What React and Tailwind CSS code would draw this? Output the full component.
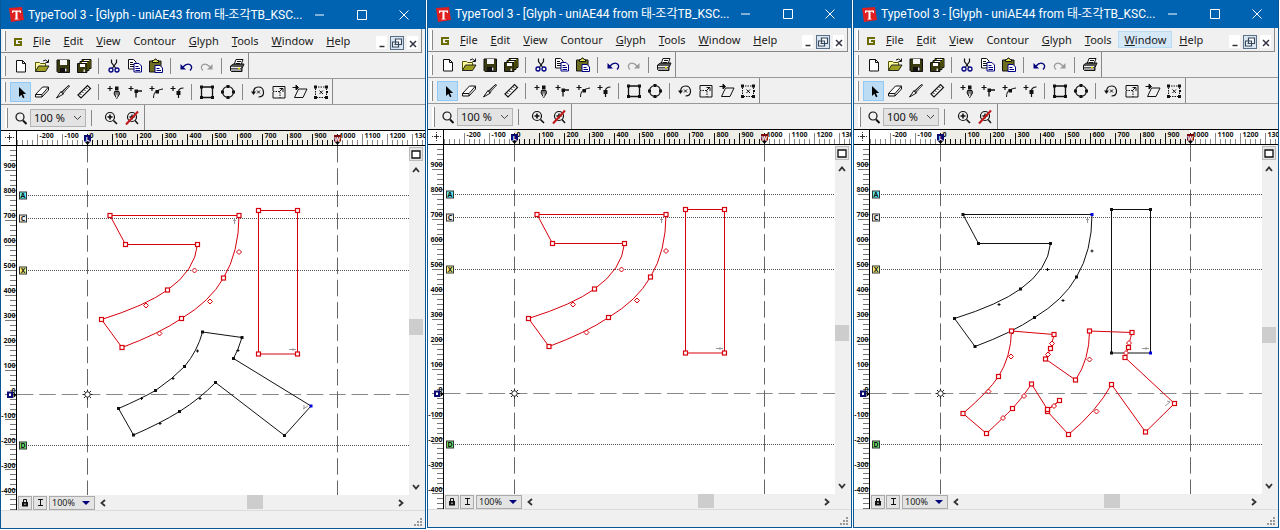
import React from "react";

/* ---------- small drawings ---------- */

function Icon({ children, size = 16 }) {
  return (
    <svg width={size} height={size} viewBox="0 0 16 16" fill="none" stroke="#111" strokeWidth="1" aria-hidden="true" className="block shrink-0">
      {children}
    </svg>
  );
}

const icons = {
  new: <path d="M3.5 2.5h6l3 3v8.500h-9zM9.500 2.500v3h3" fill="#fff" />,
  open: (
    <>
      <path d="M1.500 13.500v-9h4l1 1h5v3" fill="#ffffa0" stroke="#555500" />
      <path d="M1.500 13.500l3-5.500h10.500l-3.500 5.500z" fill="#a0a020" stroke="#222" />
      <path d="M9 3q3-2.500 5 1M14.500 1.500v3h-3" />
    </>
  ),
  save: (
    <>
      <path d="M2 2h12.500v12.500h-11.500l-1-1z" fill="#3a3a10" />
      <path d="M5 2h7v5h-7z" fill="#f4f4f4" stroke="none" />
      <path d="M5 10h7v4h-7z" fill="#111" stroke="none" />
      <path d="M10 10.500h1.500v3h-1.500z" fill="#ddd" stroke="none" />
    </>
  ),
  saveAll: (
    <>
      <path d="M6 1.500h9v9h-9z" fill="#808000" />
      <path d="M8 2h5v3h-5z" fill="#fff" stroke="none" />
      <path d="M4 3.500h9v9h-9z" fill="#808000" />
      <path d="M6 4h5v2h-5z" fill="#fff" stroke="none" />
      <path d="M1.500 5.500h9.500v9h-9.500z" fill="#3a3a10" />
      <path d="M4 6h5v3h-5z" fill="#fff" stroke="none" />
      <path d="M7.500 11.500h1.500v2.500h-1.500z" fill="#ddd" stroke="none" />
    </>
  ),
  cut: (
    <>
      <path d="M5.500 1.500v3l4 5.500M10.500 1.500v3l-4 5.500" strokeWidth="1.200" />
      <circle cx="5" cy="12" r="2" stroke="#000080" strokeWidth="1.300" />
      <circle cx="11" cy="12" r="2" stroke="#000080" strokeWidth="1.300" />
    </>
  ),
  copy: (
    <>
      <path d="M1.500 1.500h5l2.500 2.500v7h-7.500z" fill="#fff" />
      <path d="M3 4.500h3M3 6.500h4M3 8.500h4" />
      <path d="M7 5.500h5l2.500 2.500v6h-7.500z" fill="#fff" stroke="#000080" />
      <path d="M8.500 8.500h3M8.500 10.500h4.500M8.500 12.500h4.500" stroke="#000080" />
    </>
  ),
  paste: (
    <>
      <path d="M1.500 3h11.500v11h-11.500z" fill="#6e6e20" />
      <path d="M4.500 4.500v-2h1.500l1-1.500h1l1 1.500h1.500v2z" fill="#e8e84a" />
      <path d="M7 7.500h5l2.500 2.500v4.500h-7.500z" fill="#fff" stroke="#000080" />
      <path d="M8.500 10.500h3M8.500 12.500h4.500" stroke="#000080" />
    </>
  ),
  undo: (
    <>
      <path d="M5 9q4-4.500 7.500-2q2.500 2.500-.5 5.500" stroke="#00007a" strokeWidth="1.300" />
      <path d="M2.500 6v5.500h5.500z" fill="#00007a" stroke="none" />
    </>
  ),
  redo: (
    <>
      <path d="M11 9q-4-4.500-7.500-2q-2.500 2.500.5 5.500" stroke="#999" strokeWidth="1.200" />
      <path d="M13.500 6v5.500h-5.500z" fill="#999" stroke="none" />
    </>
  ),
  print: (
    <>
      <path d="M5 7l2-5.500h7l-2 5.500z" fill="#fff" />
      <path d="M8 3.500h4M7 5.500h4" />
      <path d="M1.500 8l3-2h10.500l-2 4.500v3h-10.500l-1-1z" fill="#555" />
      <path d="M2 9.500h10M2 12h10" stroke="#eee" />
      <path d="M9 10.500h2" stroke="#e8d800" strokeWidth="1.500" />
    </>
  ),
  arrow: <path d="M6 3v10l2.400-2.300 1.600 3.600 1.500-.7-1.600-3.500h3.200z" fill="#000" stroke="none" />,
  eraser: (
    <>
      <path d="M1.500 10.500l7-7.500h6l-6.500 7.500z" fill="#fff" />
      <path d="M1.500 10.500v2.500h6.500l6.500-7v-3M8 10.500v2.500" />
    </>
  ),
  knife: (
    <>
      <path d="M1.500 14l4.500-6.500 2.500 2.500z" fill="#fff" />
      <path d="M6 8.500l7.500-7 1 .5-7 8" fill="#444" />
      <path d="M8 8.500l5.500-6" stroke="#ddd" />
    </>
  ),
  ruler: (
    <>
      <path d="M2 11l9.500-9.500 3 3-9.500 9.500z" fill="#fff" strokeWidth="1.200" />
      <path d="M4 9.500l1.500 1.500M6 7.500l1.500 1.500M8 5.500l1.500 1.500M10 3.500l1.500 1.500" />
    </>
  ),
  pen: (
    <>
      <path d="M1.500 4.500h5M4 2v5" strokeWidth="1.200" />
      <path d="M9 2.500h3.500v4h-3.500z" fill="#111" stroke="none" />
      <path d="M8.500 7.500h4.500l.5 2.500-2.700 4.500-2.700-4.500z" fill="#777" />
      <path d="M10.800 14v-3.500" stroke="#fff" />
    </>
  ),
  corner: (
    <>
      <path d="M1.500 4.500h5M4 2v5" strokeWidth="1.200" />
      <path d="M9 13.500v-6.500h6" strokeWidth="1.300" />
      <path d="M7.500 5.500h3.500v3.500h-3.500z" fill="#111" stroke="none" />
    </>
  ),
  curve: (
    <>
      <path d="M1.500 4.500h5M4 2v5" strokeWidth="1.200" />
      <path d="M5.500 14q0-6 4-7.500t5.500-1.500" />
      <path d="M7.500 6h3.500v3.500h-3.500z" fill="#111" stroke="none" />
    </>
  ),
  tangent: (
    <>
      <path d="M1.500 4.500h5M4 2v5" strokeWidth="1.200" />
      <path d="M9.500 14v-6q0-4 5-4" strokeWidth="1.200" />
      <path d="M7.500 7h4v4h-4z" fill="#111" stroke="none" />
    </>
  ),
  rect: (
    <>
      <path d="M2.500 3h11v10.500h-11z" strokeWidth="1.300" />
      <path d="M1 1.500h3v3h-3zM12 1.500h3v3h-3zM1 12h3v3h-3zM12 12h3v3h-3z" fill="#111" stroke="none" />
    </>
  ),
  ellipse: (
    <>
      <circle cx="8" cy="8" r="5.500" strokeWidth="1.200" />
      <path d="M6.500 1h3v3h-3zM6.500 12h3v3h-3zM1 6.500h3v3h-3zM12 6.500h3v3h-3z" fill="#111" stroke="none" />
    </>
  ),
  rotate: (
    <>
      <path d="M3.500 8.500q.3-5.500 5-5.500t5 5-5 5" strokeWidth="1.200" />
      <path d="M1 7.500h5l-2.500 3.500z" fill="#111" stroke="none" />
      <path d="M7 6.500l3 3M10 6.500l-3 3" />
    </>
  ),
  scale: (
    <>
      <path d="M2 7v-4.500h12v11.500h-5" />
      <path d="M2 7.500h7v6.500" strokeDasharray="1.500 1" />
      <path d="M2 8v6h7" />
      <path d="M8 8l3.500-3.500M8.500 4.500h3.500v3.500" />
    </>
  ),
  skew: (
    <>
      <path d="M2.500 13.500l4-8.500h8.500l-4 8.500z" />
      <path d="M.5 3.500h5M4 1l2.500 2.500-2.500 2.500z" fill="#111" />
    </>
  ),
  free: (
    <>
      <path d="M2.500 3h11v10.500h-11z" strokeDasharray="1.500 1" />
      <path d="M1 1.500h3v3h-3zM12 1.500h3v3h-3zM1 12h3v3h-3zM12 12h3v3h-3zM13 7h2v2h-2z" fill="#111" stroke="none" />
      <path d="M6.500 6.500l3.500 3.500M10 6.500l-3.500 3.500" />
    </>
  ),
  zoom: (
    <>
      <circle cx="7" cy="7" r="4" strokeWidth="1.200" />
      <path d="M10 10.500l3.500 3.500" strokeWidth="2" />
    </>
  ),
  zoomIn: (
    <>
      <circle cx="7" cy="7" r="4.500" strokeWidth="1.200" />
      <path d="M4.500 7h5M7 4.500v5M10.500 10.500l3.500 3.500" strokeWidth="1.600" />
    </>
  ),
  noZoom: (
    <>
      <circle cx="8" cy="7" r="4.500" strokeWidth="1.200" />
      <path d="M5.500 7h5M8 4.500v5M11 10.500l3 3.500" strokeWidth="1.400" />
      <path d="M2 14.500l12-13" stroke="#c01818" strokeWidth="2" />
    </>
  ),
};

/* ---------- glyph data, in window coordinates ---------- */

const KHIEUKH = {
  d: "M110 215.5L239 215.5Q239 252 223.5 278Q210 301.5 181.5 318.5Q159.500 333.500 122 347.500L101.500 319.500Q146 305.500 167.500 290Q195 270.500 197.500 244.500L125.500 244.500Z",
  on: [[110, 215.5], [239, 215.5], [223.5, 278], [181.5, 318.5], [122, 347.5], [101.5, 319.5], [167.5, 290], [197.5, 244.5], [125.5, 244.5]],
  off: [[239, 252], [210, 301.5], [159.5, 333.5], [146, 305.5], [194.5, 270.5]],
  start: 1,
  flag: "M234.5 219v5M233 220.500h3",
};

const STEM = {
  d: "M258.5 210.5H297.5V354H258.5Z",
  on: [[258.5, 210.5], [297.5, 210.5], [297.5, 354], [258.5, 354]],
  off: [],
  start: 2,
  flag: "M289 349.500h7M293 348v3",
};

const SIOT = {
  d: "M202.5 332L242 337.5Q238 350.500 233.500 358.500L311 406L284.500 435.500L215.500 382.500Q200 398.500 179.500 411.500Q160 423.500 133.500 435L118.500 408.500Q141.500 398.500 155.500 390.500Q173 378.500 184.500 366.500Q197.500 351 202.500 332Z",
  on: [[202.5, 332], [242, 337.5], [233.5, 358.5], [311, 406], [284.5, 435.5], [215.5, 382.5], [179.5, 411.5], [133.5, 435], [118.5, 408.5], [155.5, 390.5], [184.5, 366.5]],
  off: [[238, 350.5], [200, 398.5], [160, 423.5], [141.5, 398.5], [173, 378.5], [197.5, 351]],
  start: 3,
  flag: "M303 409l5-3M304 405v4",
};

const SSANGSIOT = {
  d: "M158.5 332L201 335.500Q199 344.500 197.500 349.500Q195 355.500 192.500 360L222.500 381Q236.500 360.500 236.500 332L279 333.500Q276 344 275.500 348.500Q273 354 272 358.500L321.500 404.500L292.500 433L258.500 385.500Q243.500 412.500 215.500 435.500L194.500 412.500V410.500Q201 407 206.500 401.500Q201 407 194.500 410.500L178.500 385Q171 397 159.500 409.500Q150 419 133.500 434.500L110 414.500Q135.500 392.500 145.500 377.500Q158 357.500 158.500 332Z",
  on: [[158.5, 332], [201, 335.5], [197.5, 349.5], [192.5, 360], [222.5, 381], [236.5, 332], [279, 333.5], [275.5, 348.5], [272, 358.5], [321.5, 404.5], [292.5, 433], [258.5, 385.5], [215.5, 435.5], [194.5, 412.5], [194.5, 410.5], [206.5, 401.5], [178.5, 385], [159.5, 409.5], [133.5, 434.5], [110, 414.5], [145.5, 377.5]],
  off: [[199, 344.5], [195, 355.5], [236.5, 360.5], [276, 344], [273, 354], [243.5, 412.5], [201, 407], [171, 397], [150, 419], [135.5, 392.5], [158, 357.5]],
  start: 9,
  flag: "M312 407l5-4M314 402l3 1",
};

function Contour({ shape, selected }) {
  const color = selected ? "#d8000c" : "#111";
  return (
    <g fill="none" stroke={color} strokeWidth="1">
      <path d={shape.d} />
      <path d={shape.flag} stroke="#999" />
      {shape.off.map(([x, y], i) =>
        selected ? (
          <path key={i} d={`M${x - 2.5} ${y}l2.500-2.500 2.500 2.500-2.500 2.500z`} fill="#fff" />
        ) : (
          <path key={i} d={`M${x - 1.5} ${y}h3M${x} ${y - 1.5}v3`} />
        ),
      )}
      {shape.on.map(([x, y], i) =>
        selected ? (
          <rect key={i} x={x - 2} y={y - 2} width="4" height="4" fill="#fff" strokeWidth="1.200" />
        ) : (
          <rect key={i} x={x - 1.5} y={y - 1.5} width="3" height="3" stroke="none" fill={i === shape.start ? "#0000e0" : "#111"} />
        ),
      )}
    </g>
  );
}

const ZONES = [
  { name: "A", y: 195.5, fill: "#5ff0f0" },
  { name: "C", y: 218.5, fill: "#f0f0e8" },
  { name: "X", y: 270.5, fill: "#f6f680" },
  { name: "D", y: 445.5, fill: "#6fe86f" },
];

function Canvas({ contours }) {
  return (
    <svg className="block h-full min-w-0 flex-1 bg-white" role="img" aria-label="Glyph outline">
      <g transform="translate(-17 -146)">
        {ZONES.map((z) => (
          <g key={z.name}>
            <line x1="28" x2="2000" y1={z.y} y2={z.y} stroke="#555" strokeDasharray="1 1" />
            <rect x="19.5" y={z.y - 3.5} width="7" height="7" fill={z.fill} stroke="#333" />
            <text x="23" y={z.y + 2.5} textAnchor="middle" fontSize="7" fontWeight="700" fill="#111">{z.name}</text>
          </g>
        ))}
        <line x1="17" x2="2000" y1="394.5" y2="394.5" stroke="#888" strokeDasharray="16.5 5.8" />
        <line x1="87.5" x2="87.5" y1="146" y2="2000" stroke="#666" strokeDasharray="16.5 5.8" />
        <line x1="337.5" x2="337.5" y1="146" y2="2000" stroke="#666" strokeDasharray="16.5 5.8" />
        <g stroke="#222" fill="none">
          <circle cx="87.5" cy="394.5" r="2.700" fill="#fff" />
          <path d="M82.500 394.500h2M90.500 394.500h2M87.500 389.500v2M87.500 397.500v2M84 391l1.300 1.300M91 391l-1.300 1.300M84 398l1.300-1.300M91 398l-1.300-1.300" />
        </g>
        {contours.map(([shape, selected], i) => (
          <Contour key={i} shape={shape} selected={selected} />
        ))}
      </g>
    </svg>
  );
}

function TopRuler() {
  const ticks = [];
  for (let i = -14; i <= 67; i++) ticks.push(i);
  return (
    <svg className="block h-4 w-full bg-white" aria-label="Horizontal ruler" role="img">
      <g transform="translate(-1 -130)">
        <rect x="87" y="131" width="250" height="14" fill="#efeee6" />
        {ticks.map((i) => {
          const x = 87.5 + i * 5;
          const major = i % 5 === 0;
          const inside = i >= 0 && i <= 50;
          return <line key={i} x1={x} x2={x} y1={major ? 134 : 140} y2="145" stroke={inside ? "#111" : "#888"} />;
        })}
        {ticks.filter((i) => i % 5 === 0 && i >= -10 && i <= 65).map((i) => (
          <text key={i} x={89.5 + i * 5} y="138" fontSize="7" fontWeight="700" fill="#111">{i * 20}</text>
        ))}
        <rect x="1" y="131" width="16" height="15" fill="#fff" />
        <path d="M5 137.500h9M9.500 133v9" stroke="#333" strokeDasharray="1 1" />
        <path d="M8 137.500h3M9.500 136v3" stroke="#333" />
        <path d="M16.500 130v16" stroke="#000" />
        <path d="M1 130.500h2000M1 145.500h2000" stroke="#000" />
        <Marker x={87.5} letter="L" fill="#0a0a70" />
        <Marker x={337.5} letter="W" fill="#7a0a10" />
      </g>
    </svg>
  );
}

function Marker({ x, letter, fill }) {
  return (
    <g>
      <rect x={x - 3.500} y="135" width="7" height="6.500" fill={fill} />
      <text x={x} y="140.500" textAnchor="middle" fontSize="6" fontWeight="700" fill="#fff">{letter}</text>
      <path d={`M${x - 2.500} 142h5l-2.500 3z`} fill="#000" />
    </g>
  );
}

function SideRuler() {
  const ticks = [];
  for (let i = -23; i <= 49; i++) ticks.push(i);
  return (
    <svg className="block h-full w-4 shrink-0 bg-white" aria-label="Vertical ruler" role="img">
      <g transform="translate(-1 -146)">
        {ticks.map((i) => {
          const y = 394.5 - i * 5 + (i > 0 ? 1 : 0);
          return <line key={i} x1={i % 5 === 0 ? 5 : 10} x2="16" y1={y} y2={y} stroke="#777" />;
        })}
        {ticks.filter((i) => i % 5 === 0).map((i) => (
          <text key={i} x="15.500" y={393 - i * 5} textAnchor="end" fontSize="7" fontWeight="700" fill="#111">{i * 20}</text>
        ))}
        <rect x="7" y="391.500" width="6" height="6.500" fill="#0a0a70" />
        <rect x="9" y="393.500" width="2" height="2.500" fill="#fff" />
        <path d="M13.500 392v6l3-3z" fill="#000" />
        <path d="M16.500 146v2000" stroke="#000" />
      </g>
    </svg>
  );
}

/* ---------- chrome ---------- */

const WINDOW_BUTTONS = [
  { label: "Minimize", d: "M3 8h9", size: "w-9 pr-[6px]" },
  { label: "Maximize", d: "M3.500 3.500h9v9h-9z", size: "w-[42px]" },
  { label: "Close", d: "M3.500 3.500l9 9M12.500 3.500l-9 9", size: "w-[42px]" },
];

function TitleBar({ title, tall }) {
  return (
    <header className={`flex shrink-0 items-center bg-[#0063b1] pl-2 text-white ${tall ? "h-[29px]" : "h-7"}`}>
      <svg width="15" height="15" viewBox="0 0 15 15" aria-hidden="true" className="shrink-0">
        <path d="M0 1l13-1 2 13-13 2z" fill="#e02020" />
        <path d="M3 3.500h9v2.500h-1l-.5-1.300h-2v6.800l1 .5v.5h-4v-.5l1-.5v-6.800h-2l-.5 1.300h-1z" fill="#fff" />
      </svg>
      <h1 className="ml-1 min-w-0 flex-1 font-['Roboto','Noto_Sans_CJK_KR',sans-serif] text-[12px] leading-4 whitespace-nowrap">{title}</h1>
      <div className="flex shrink-0">
        {WINDOW_BUTTONS.map((b) => (
          <button key={b.label} type="button" aria-label={b.label} className={`flex h-7 items-center justify-center ${b.size}`}>
            <svg width="16" height="16" viewBox="0 0 16 16" fill="none" stroke="#fff" aria-hidden="true"><path d={b.d} /></svg>
          </button>
        ))}
      </div>
    </header>
  );
}

function Grip() {
  return <span className="h-5 w-[3px] shrink-0 border-r border-[#888] bg-white" />;
}

const MENUS = [["F", "ile"], ["E", "dit"], ["V", "iew"], ["", "Contour"], ["G", "lyph"], ["T", "ools"], ["W", "indow"], ["H", "elp"]];

function MenuBar({ active }) {
  return (
    <nav className="mr-[3px] flex h-6 shrink-0 items-center border-r border-b border-[#888] pl-[2px]">
      <Grip />
      <svg width="8" height="8" viewBox="0 0 8 8" className="mt-[2px] mr-1 ml-2 shrink-0" aria-hidden="true">
        <path d="M8 1H1v6h6V4H4" fill="none" stroke="#6b6b00" strokeWidth="2" />
      </svg>
      {MENUS.map(([key, rest]) => (
        <button
          key={rest}
          type="button"
          className={`h-[17px] border pr-[5px] pl-[6px] text-[11px] leading-3 whitespace-nowrap text-[#1a1a1a] ${active === key + rest ? "border-[#b8dcf5] bg-[#d5e8f8]" : "border-transparent"}`}
        >
          <u>{key}</u>{rest}
        </button>
      ))}
      <div className="mt-1 mr-[3px] ml-auto flex items-center gap-[3px]">
        <button type="button" aria-label="Minimize glyph window" className="flex h-[13px] w-[11px] items-center justify-center bg-white">
          <svg width="10" height="12" viewBox="0 0 10 12" stroke="#333" strokeWidth="1.500" aria-hidden="true"><path d="M2.500 9.500h5" /></svg>
        </button>
        <button type="button" aria-label="Restore glyph window" className="flex h-[14px] w-[14px] items-center justify-center border border-[#5a6f88] bg-[#dce6f0]">
          <svg width="12" height="12" viewBox="0 0 12 12" fill="#fff" stroke="#33475f" strokeWidth="1.200" aria-hidden="true"><path d="M4.500 2h6v5.500h-6zM1.500 5h6v5h-6z" /><path d="M3.500 7.500h2" /></svg>
        </button>
        <button type="button" aria-label="Close glyph window" className="flex h-[13px] w-[11px] items-center justify-center bg-white">
          <svg width="10" height="12" viewBox="0 0 10 12" stroke="#334" strokeWidth="1.500" aria-hidden="true"><path d="M2 4l6 6M8 4l-6 6" /></svg>
        </button>
      </div>
    </nav>
  );
}

function Tool({ name, label, active }) {
  return (
    <button type="button" aria-label={label} className={`flex h-5 w-[21px] shrink-0 items-center justify-center ${active ? "border border-[#90c8f6] bg-[#bcdcf4]" : ""}`}>
      <Icon>{icons[name]}</Icon>
    </button>
  );
}

function Sep() {
  return <span className="mx-1 h-4 w-px shrink-0 bg-[#888]" />;
}

function ToolRow({ items }) {
  return (
    <div className="flex h-[26px] shrink-0 border-b border-[#999]">
      <div className="flex items-center border-r border-[#888] pr-px pl-[2px]">
        <Grip />
        <span className="w-1" />
        {items.map((it, i) => (it === "|" ? <Sep key={i} /> : <Tool key={i} name={it[0]} label={it[1]} active={it[0] === "arrow"} />))}
      </div>
    </div>
  );
}

const FILE_TOOLS = [
  ["new", "New"], ["open", "Open"], ["save", "Save"], ["saveAll", "Save all"], "|",
  ["cut", "Cut"], ["copy", "Copy"], ["paste", "Paste"], "|",
  ["undo", "Undo"], ["redo", "Redo"], "|", ["print", "Print"],
];

const DRAW_TOOLS = [
  ["arrow", "Edit"], ["eraser", "Eraser"], ["knife", "Knife"], ["ruler", "Meter"], "|",
  ["pen", "Drawing"], ["corner", "Add corner"], ["curve", "Add curve"], ["tangent", "Add tangent"], "|",
  ["rect", "Rectangle"], ["ellipse", "Ellipse"], "|",
  ["rotate", "Rotate"], ["scale", "Scale"], ["skew", "Slant"], ["free", "Free transform"],
];

function ZoomRow() {
  return (
    <div className="flex h-[25px] shrink-0">
      <div className="flex items-center border-r border-[#888] pr-[2px] pl-[4px]">
        <Grip />
        <span className="ml-1 flex w-[18px] justify-center"><Icon>{icons.zoom}</Icon></span>
        <div className="relative">
          <select aria-label="Zoom" className="block h-[18px] w-14 appearance-none border border-[#b4b4b4] bg-[#e3e3e3] pl-[3px] text-[11px] leading-4 text-[#111]">
            <option>100 %</option>
          </select>
          <svg width="9" height="6" viewBox="0 0 9 6" fill="none" stroke="#444" className="pointer-events-none absolute top-[6px] right-1" aria-hidden="true"><path d="M1 1l3.500 3.500L8 1" /></svg>
        </div>
        <span className="mr-2 ml-[5px] h-4 w-px bg-[#888]" />
        <Tool name="zoomIn" label="Zoom in" />
        <Tool name="noZoom" label="Zoom off" />
      </div>
    </div>
  );
}

function Chevron({ d }) {
  return <svg width="8" height="8" viewBox="0 0 8 8" fill="none" stroke="#333" strokeWidth="1.800" aria-hidden="true"><path d={d} /></svg>;
}

function VScroll({ thumb }) {
  return (
    <div className="flex w-[14px] shrink-0 flex-col items-center bg-[#f0f0f0]">
      <button type="button" aria-label="Fit view" className="mt-px flex h-[14px] w-[14px] shrink-0 items-center justify-center border border-[#bbb] bg-[#e6e6e6]">
        <svg width="10" height="9" viewBox="0 0 10 9" aria-hidden="true"><path d="M1 1h8v7H1z" fill="#fff" stroke="#111" strokeWidth="1.300" /></svg>
      </button>
      <button type="button" aria-label="Scroll up" className="mt-[3px] flex h-3 w-full items-center justify-center"><Chevron d="M1 6l3-3.500 3 3.500" /></button>
      <div className="w-full flex-1"><div className={`h-4 w-full bg-[#cdcdcd] ${thumb}`} /></div>
      <button type="button" aria-label="Scroll down" className="flex h-4 w-full items-center justify-center"><Chevron d="M1 2l3 3.500 3-3.500" /></button>
    </div>
  );
}

function BottomBar({ thumb }) {
  return (
    <div className="flex h-[15px] shrink-0 items-center bg-[#f0f0f0] pl-px">
      <button type="button" aria-label="Lock" className="flex h-[14px] w-[14px] items-center justify-center border border-[#aaa] bg-[#e4e4e4]">
        <svg width="8" height="9" viewBox="0 0 8 9" aria-hidden="true"><path d="M1 4h6v4.500H1z" fill="#111" /><path d="M2.500 4V1.500h3V4" fill="none" stroke="#111" /><path d="M3.500 5.500h1v1.500h-1z" fill="#fff" /></svg>
      </button>
      <button type="button" aria-label="Text cursor" className="ml-px flex h-[14px] w-[14px] items-center justify-center border border-[#aaa] bg-[#e4e4e4]">
        <svg width="7" height="9" viewBox="0 0 7 9" fill="none" stroke="#111" aria-hidden="true"><path d="M1 1.500h5M1 7.500h5M3.500 1.500v6" /></svg>
      </button>
      <div className="relative ml-[2px]">
        <select aria-label="View scale" className="block h-[14px] w-[46px] appearance-none border border-[#aaa] bg-[#e4e4e4] pl-[2px] text-[9px] leading-3 text-[#222]">
          <option>100%</option>
        </select>
        <svg width="8" height="4" viewBox="0 0 8 4" className="pointer-events-none absolute top-[5px] right-[5px]" aria-hidden="true"><path d="M0 0h8L4 4z" fill="#00007a" /></svg>
      </div>
      <button type="button" aria-label="Scroll left" className="flex h-full w-4 items-center justify-center"><Chevron d="M6 1L2.500 4 6 7" /></button>
      <div className="h-full flex-1"><div className={`h-[14px] w-4 bg-[#cdcdcd] ${thumb}`} /></div>
      <button type="button" aria-label="Scroll right" className="mr-[14px] flex h-full w-4 items-center justify-center"><Chevron d="M2 1l3.500 3L2 7" /></button>
    </div>
  );
}

function GlyphWindow({ title, active, contours, vThumb, hThumb, tall }) {
  return (
    <section className={`mr-px flex min-w-0 flex-col overflow-hidden border-r border-b border-l border-[#0a5796] bg-[#f0f0f0] ${tall ? "mb-px" : "mb-[2px]"}`}>
      <TitleBar title={title} tall={tall} />
      <MenuBar active={active} />
      <ToolRow items={FILE_TOOLS} />
      <ToolRow items={DRAW_TOOLS} />
      <ZoomRow />
      <TopRuler />
      <div className="flex min-h-0 flex-1 pr-[2px]">
        <SideRuler />
        <div className="flex min-w-0 flex-1 flex-col">
          <div className="flex min-h-0 flex-1">
            <Canvas contours={contours} />
            <VScroll thumb={vThumb} />
          </div>
          <BottomBar thumb={hThumb} />
        </div>
      </div>
      <footer className="flex h-[18px] shrink-0 items-end justify-end border-t border-[#dcdcdc] pr-[2px] pb-px">
        <svg width="9" height="9" viewBox="0 0 9 9" fill="#999" aria-hidden="true">
          <path d="M6 0h2v2H6zM3 3h2v2H3zM6 3h2v2H6zM0 6h2v2H0zM3 6h2v2H3zM6 6h2v2H6z" />
        </svg>
      </footer>
    </section>
  );
}

export default function App() {
  return (
    <main className="grid h-screen min-h-[420px] grid-cols-[minmax(0,427fr)_minmax(0,426fr)_minmax(0,427fr)] bg-white font-['Noto_Sans','Noto_Sans_CJK_KR',sans-serif]">
      <GlyphWindow
        tall
        title="TypeTool 3 - [Glyph - uniAE43 from 태-조각TB_KSC..."
        contours={[[KHIEUKH, true], [STEM, true], [SIOT, false]]}
        vThumb="mt-[143px]"
        hThumb="ml-[136px]"
      />
      <GlyphWindow
        title="TypeTool 3 - [Glyph - uniAE44 from 태-조각TB_KSC..."
        contours={[[KHIEUKH, true], [STEM, true]]}
        vThumb="mt-[150px]"
        hThumb="ml-[160px]"
      />
      <GlyphWindow
        title="TypeTool 3 - [Glyph - uniAE44 from 태-조각TB_KSC..."
        active="Window"
        contours={[[KHIEUKH, false], [STEM, false], [SSANGSIOT, true]]}
        vThumb="mt-[152px]"
        hThumb="ml-[140px]"
      />
    </main>
  );
}
